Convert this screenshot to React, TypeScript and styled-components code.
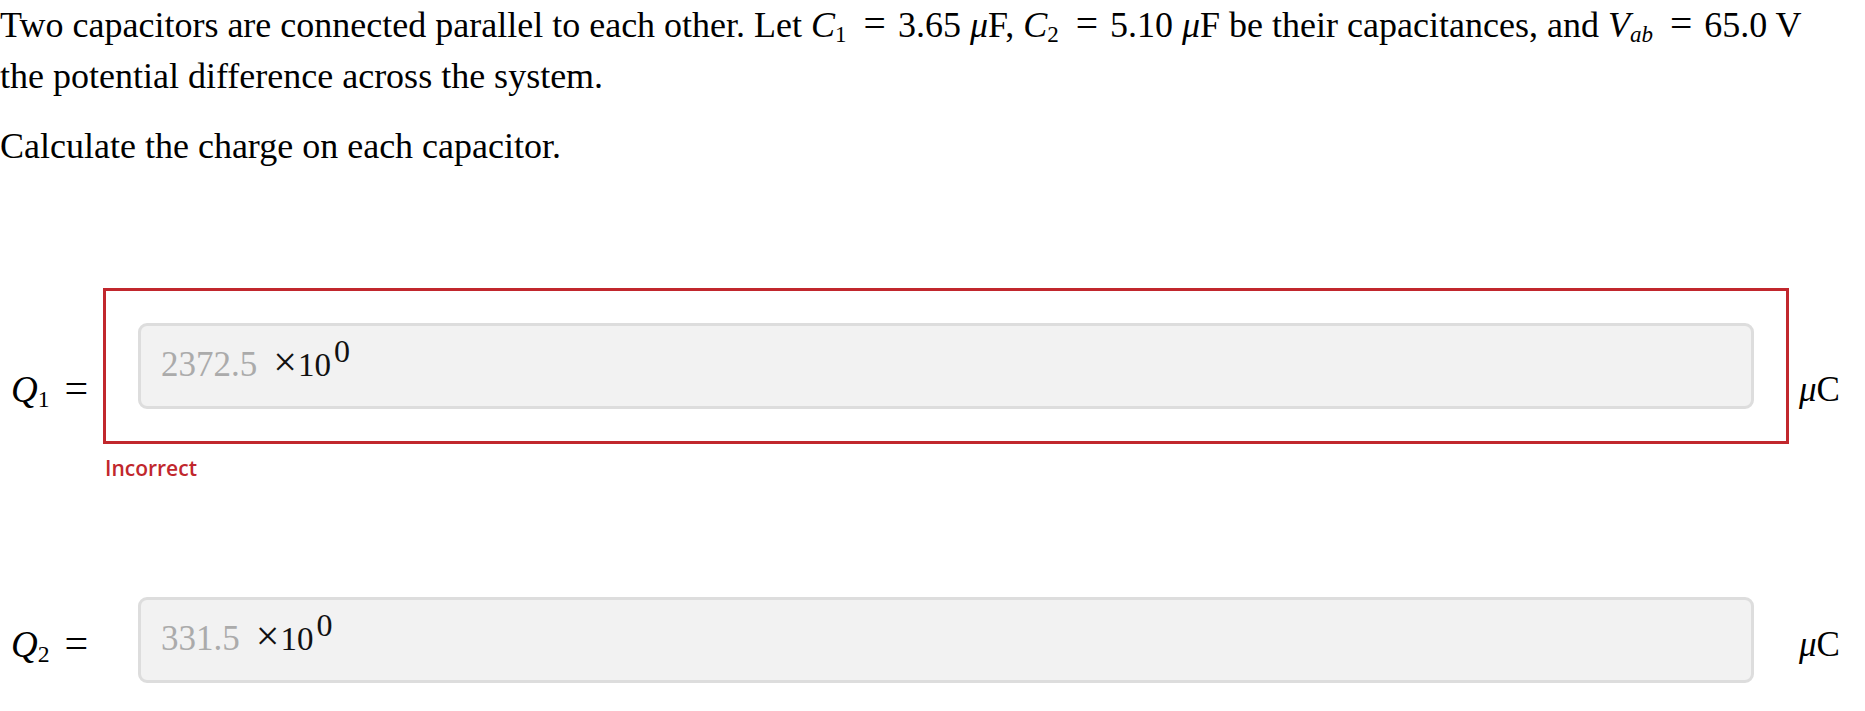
import React from "react";
import styled, { createGlobalStyle } from "styled-components";

const RED = "#c1272d";

const Global = createGlobalStyle`
  html, body {
    margin: 0;
    padding: 0;
    background: #ffffff;
    overflow: hidden;
  }
  body {
    color: #000000;
    font-family: "Liberation Serif", "Times New Roman", serif;
  }
`;

const Page = styled.main`
  padding: 0 20px 0 0;
`;

const Para = styled.p`
  margin: 0;
  font-size: 36px;
  line-height: 51px;
  & + & {
    margin-top: 19px;
  }
`;

const Var = styled.span`
  font-style: italic;
`;

const Sub = styled.span<{ $italic?: boolean }>`
  font-size: 0.64em;
  font-style: ${(p) => (p.$italic ? "italic" : "normal")};
  vertical-align: -0.2em;
  line-height: 0;
`;

const Eq = styled.span`
  display: inline-block;
  font-size: 1.1em;
  line-height: 0;
  margin: 0 12px 0 17px;
`;

const Questions = styled.section`
  margin-top: 116px;
  display: flex;
  flex-direction: column;
  gap: 80px;
`;

const Row = styled.div`
  display: grid;
  grid-template-columns: 103px 1fr 56px;
  align-items: start;
`;

const Label = styled.div<{ $offset: number }>`
  padding: ${(p) => p.$offset}px 0 0 11px;
  font-size: 37px;
  line-height: 40px;
  white-space: nowrap;
`;

const LabelEq = styled.span`
  display: inline-block;
  font-size: 42px;
  line-height: 0;
  margin-left: 15px;
`;

const Unit = styled.div<{ $offset: number }>`
  padding: ${(p) => p.$offset}px 0 0 10px;
  font-size: 35px;
  line-height: 40px;
  white-space: nowrap;
`;

const AnswerColumn = styled.div`
  display: flex;
  flex-direction: column;
`;

const AnswerBox = styled.div<{ $incorrect?: boolean }>`
  border: 3px solid ${(p) => (p.$incorrect ? RED : "transparent")};
  padding: 32px;
`;

const Field = styled.div`
  box-sizing: border-box;
  height: 86px;
  border: 3px solid #dddddd;
  border-radius: 9px;
  background: #f2f2f2;
  padding: 19px 20px 0;
  display: flex;
  align-items: baseline;
  line-height: 40px;
`;

const Value = styled.span`
  font-size: 35px;
  color: #ababab;
`;

const Power = styled.span`
  font-size: 33px;
  color: #111111;
  margin-left: 16px;
`;

const Times = styled.span`
  font-size: 42px;
  line-height: 0;
  margin-right: 1px;
`;

const Sup = styled.span`
  font-size: 32px;
  line-height: 0;
  vertical-align: 14px;
  margin-left: 3px;
`;

const Feedback = styled.div`
  margin-top: 10px;
  padding-left: 2px;
  font-family: "Open Sans", "Noto Sans", sans-serif;
  font-weight: 600;
  font-size: 21px;
  line-height: 28px;
  color: ${RED};
`;

type Answer = {
  index: string;
  value: string;
  incorrect?: boolean;
  offset: number;
};

const answers: Answer[] = [
  { index: "1", value: "2372.5", incorrect: true, offset: 82 },
  { index: "2", value: "331.5", offset: 63 },
];

export default function App() {
  return (
    <Page>
      <Global />
      <Para>
        Two capacitors are connected parallel to each other. Let{" "}
        <Var>C</Var>
        <Sub>1</Sub>
        <Eq>=</Eq>3.65 <Var>μ</Var>F, <Var>C</Var>
        <Sub>2</Sub>
        <Eq>=</Eq>5.10 <Var>μ</Var>F be their capacitances, and <Var>V</Var>
        <Sub $italic>ab</Sub>
        <Eq>=</Eq>65.0 V the potential difference across the system.
      </Para>
      <Para>Calculate the charge on each capacitor.</Para>
      <Questions>
        {answers.map((a) => (
          <Row key={a.index}>
            <Label $offset={a.offset}>
              <Var>Q</Var>
              <Sub>{a.index}</Sub>
              <LabelEq>=</LabelEq>
            </Label>
            <AnswerColumn>
              <AnswerBox $incorrect={a.incorrect}>
                <Field>
                  <Value>{a.value}</Value>
                  <Power>
                    <Times>×</Times>10<Sup>0</Sup>
                  </Power>
                </Field>
              </AnswerBox>
              {a.incorrect && <Feedback>Incorrect</Feedback>}
            </AnswerColumn>
            <Unit $offset={a.offset}>
              <Var>μ</Var>C
            </Unit>
          </Row>
        ))}
      </Questions>
    </Page>
  );
}
